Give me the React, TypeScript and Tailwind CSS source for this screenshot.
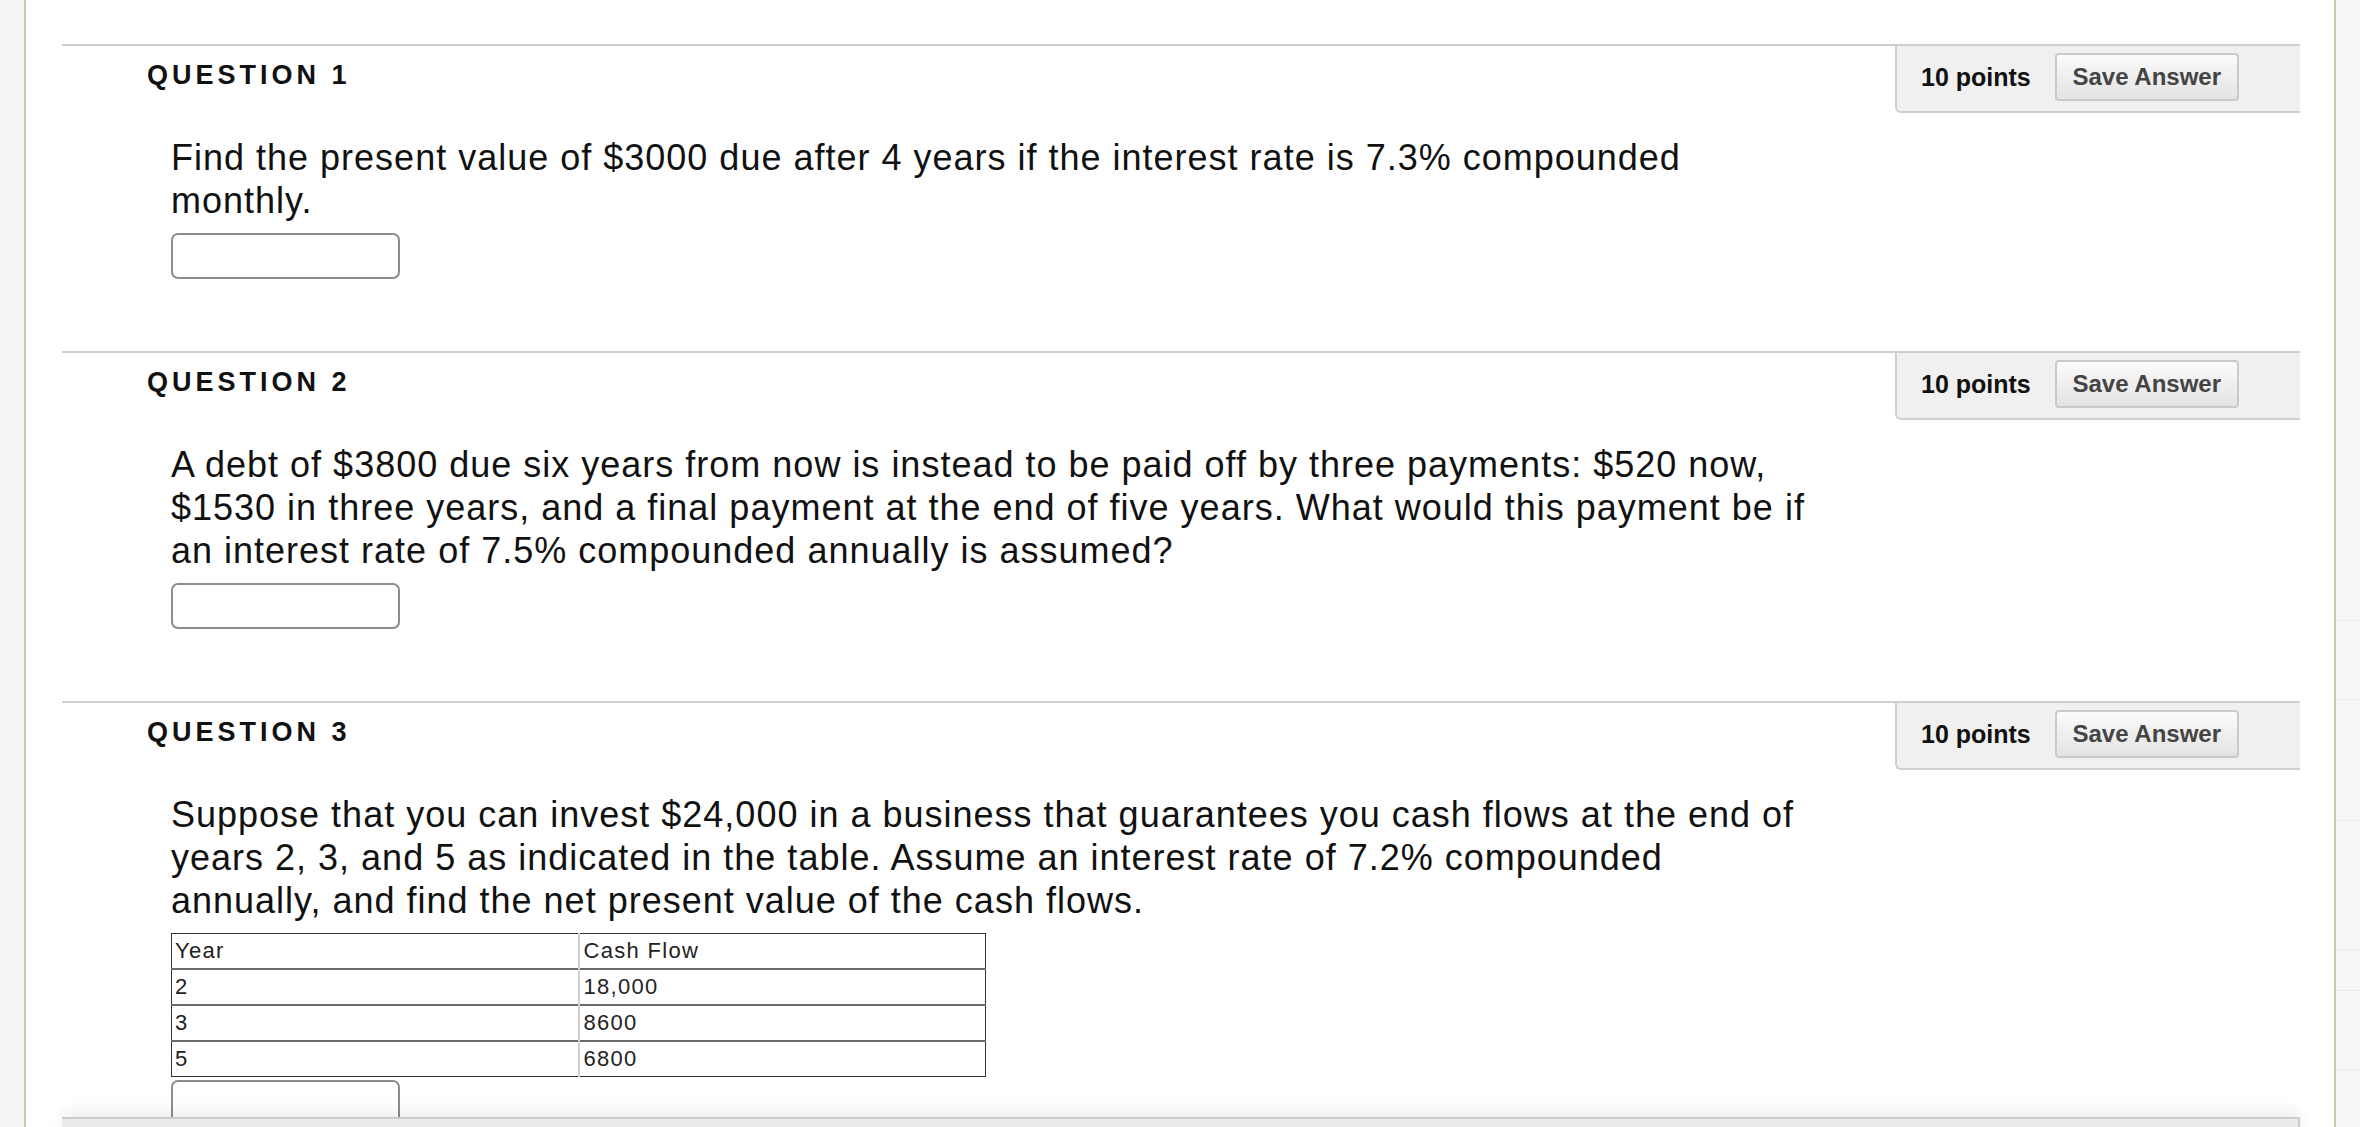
import React from 'react'

type Question = {
  num: number
  lines: string
  table?: { year: string; flow: string }[]
}

const questions: Question[] = [
  {
    num: 1,
    lines: 'Find the present value of $3000 due after 4 years if the interest rate is 7.3% compounded monthly.',
  },
  {
    num: 2,
    lines:
      'A debt of $3800 due six years from now is instead to be paid off by three payments: $520 now, $1530 in three years, and a final payment at the end of five years. What would this payment be if an interest rate of 7.5% compounded annually is assumed?',
  },
  {
    num: 3,
    lines:
      'Suppose that you can invest $24,000 in a business that guarantees you cash flows at the end of years 2, 3, and 5 as indicated in the table. Assume an interest rate of 7.2% compounded annually, and find the net present value of the cash flows.',
    table: [
      { year: '2', flow: '18,000' },
      { year: '3', flow: '8600' },
      { year: '5', flow: '6800' },
    ],
  },
]

function PointsBox() {
  return (
    <div className="flex items-center gap-[24px] pl-[24px] pr-[60px] pb-[3px] h-[67px] w-[405px] bg-[#f0f0f0] border-l-2 border-b-2 border-[#cfcfcf] rounded-bl-[6px]">
      <span className="text-[25px] font-bold text-[#111] leading-none whitespace-nowrap">10 points</span>
      <button className="h-[48px] w-[184px] rounded-[4px] border-2 border-[#cacaca] bg-gradient-to-b from-[#fbfbfb] to-[#e3e3e3] text-[24px] font-bold text-[#444] leading-none">
        Save Answer
      </button>
    </div>
  )
}

function CashTable({ rows }: { rows: { year: string; flow: string }[] }) {
  const all = [{ year: 'Year', flow: 'Cash Flow' }, ...rows]
  return (
    <table className="mt-[11px] w-[815px] border-collapse border-[1.5px] border-[#333] text-[22px] tracking-[1.3px] text-[#222]">
      <tbody>
        {all.map((r, i) => (
          <tr key={i} className={i > 0 ? 'border-t-2 border-[#6a6a6a]' : ''}>
            <td className="w-[407px] h-[34px] pl-[3px] leading-[34px] p-0">{r.year}</td>
            <td className="h-[34px] pl-[4px] leading-[34px] p-0 border-l-2 border-[#d2d2d2]">{r.flow}</td>
          </tr>
        ))}
      </tbody>
    </table>
  )
}

function QuestionBlock({ q }: { q: Question }) {
  return (
    <section className="border-t-2 border-[#cfcfcf] pb-[72px]">
      <div className="flex justify-between items-start">
        <h2 className="pl-[85px] pt-[14px] text-[27px] leading-[30px] font-bold tracking-[4px] text-[#111]">
          QUESTION {q.num}
        </h2>
        <PointsBox />
      </div>
      <div className="pl-[109px]">
        <p className="mt-[23px] w-[1645px] text-[36px] leading-[43px] tracking-[1px] text-[#111]">{q.lines}</p>
        {q.table && <CashTable rows={q.table} />}
        <input
          type="text"
          className={`${q.table ? 'mt-[3px]' : 'mt-[11px]'} block h-[46px] w-[229px] rounded-[7px] border-2 border-[#8c8c8c] bg-white`}
        />
      </div>
    </section>
  )
}

export default function App() {
  return (
    <div
      className="flex h-[1127px] w-[2360px] overflow-hidden bg-[#f5f5f5]"
      style={{ fontFamily: '"Liberation Sans", Arial, Helvetica, sans-serif' }}
    >
      <div className="w-[24px] bg-[#f4f4f4]" />
      <div className="w-[2px] bg-[#cdc9a8]" />
      <main className="relative flex-1 bg-white pl-[36px] pr-[34px] pt-[44px]">
        {questions.map((q) => (
          <QuestionBlock key={q.num} q={q} />
        ))}
        {/* sticky submit bar peeking at the bottom */}
        <div className="absolute left-[36px] right-[34px] top-[1117px] h-[20px] bg-[#ebebeb] border-t-2 border-r-2 border-[#cccccc] shadow-[0_-6px_14px_rgba(0,0,0,0.07)]" />
      </main>
      <div className="w-[2px] bg-[#cdc9a8]" />
      <div className="flex w-[24px] flex-col bg-[#f7f7f7]">
        <div className="mt-[620px] h-[80px] border-y border-[#ececec]" />
        <div className="mt-[120px] h-[130px] border-y border-[#ececec]" />
        <div className="mt-[40px] h-[80px] border-y border-[#ececec]" />
      </div>
    </div>
  )
}
